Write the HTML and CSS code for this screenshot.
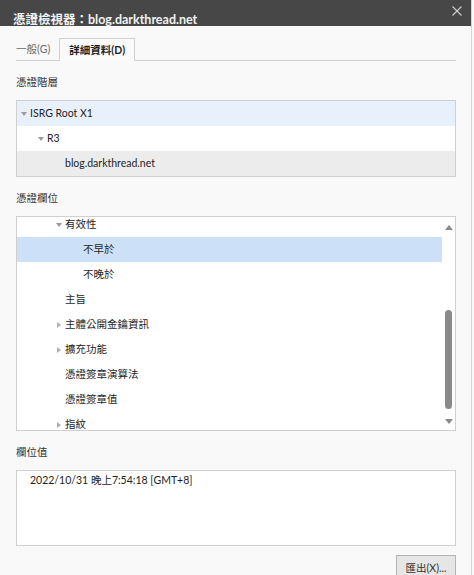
FILE: index.html
```html
<!DOCTYPE html>
<html lang="zh-TW">
<head>
    <meta charset="UTF-8">
    <title>憑證檢視器</title>
    <link rel="stylesheet" href="styles.css">
</head>
<body>
    <div class="window">
        <div class="titlebar">
            <div class="title">憑證檢視器：blog.darkthread.net</div>
            <div class="close">
                <svg width="10" height="10" viewBox="0 0 10 10"><path d="M0.5 0.5L9.5 9.5M9.5 0.5L0.5 9.5" stroke="#d0d0d0" stroke-width="1.1" fill="none"/></svg>
            </div>
        </div>

        <div class="content">
            <div class="tabs">
                <div class="tab">一般(G)</div>
                <div class="tab active">詳細資料(D)</div>
            </div>

            <div class="section">
                <div class="label">憑證階層</div>
                <div class="box tree">
                    <div class="row hover lv0"><span class="arrow down"></span>ISRG Root X1</div>
                    <div class="row lv1"><span class="arrow down"></span>R3</div>
                    <div class="row current lv2"><span class="arrow none"></span>blog.darkthread.net</div>
                </div>
            </div>

            <div class="section">
                <div class="label">憑證欄位</div>
                <div class="box fields">
                    <div class="list">
                        <div class="inner">
                            <div class="row lv2"><span class="arrow down"></span>有效性</div>
                            <div class="row selected lv3"><span class="arrow none"></span>不早於</div>
                            <div class="row lv3"><span class="arrow none"></span>不晚於</div>
                            <div class="row lv2"><span class="arrow none"></span>主旨</div>
                            <div class="row lv2"><span class="arrow right"></span>主體公開金鑰資訊</div>
                            <div class="row lv2"><span class="arrow right"></span>擴充功能</div>
                            <div class="row lv2"><span class="arrow none"></span>憑證簽章演算法</div>
                            <div class="row lv2"><span class="arrow none"></span>憑證簽章值</div>
                            <div class="row lv2"><span class="arrow right"></span>指紋</div>
                        </div>
                    </div>
                    <div class="scrollbar">
                        <span class="sb-up"></span>
                        <div class="track"><div class="thumb"></div></div>
                        <span class="sb-down"></span>
                    </div>
                </div>
            </div>

            <div class="section">
                <div class="label">欄位值</div>
                <div class="box value">2022/10/31 晚上7:54:18 [GMT+8]</div>
            </div>

            <div class="actions">
                <button class="btn">匯出(X)...</button>
            </div>
        </div>
    </div>
</body>
</html>
```

FILE: styles.css
```css
body {
    margin: 0;
    background-color: #f9f9f9;
    font-family: Lato, "Noto Sans CJK TC", sans-serif;
    font-size: 10.5px;
    color: #1e1e1e;
}

.window {
    width: 471px;
    height: 575px;
    border-right: 1px solid #d4d4d4;
    overflow: hidden;
}

.titlebar {
    height: 26px;
    background-color: #474747;
    display: flex;
    box-sizing: border-box;
    padding: 0 9px 0 13px;
}

.title {
    color: #f2f2f2;
    font-weight: bold;
    font-size: 12.5px;
    line-height: 16px;
    padding-top: 12px;
}

.close {
    margin-left: auto;
    width: 10px;
    height: 10px;
    margin-top: 6px;
    line-height: 0;
}

.content {
    padding: 0 15px 0 16px;
}

.tabs {
    margin-top: 12px;
    height: 22px;
    border-bottom: 1px solid #d2d2d2;
    display: flex;
    align-items: flex-end;
}

.tab {
    height: 22px;
    line-height: 22px;
    color: #6a6a6a;
    padding-right: 9px;
}

.tab.active {
    color: #1e1e1e;
    font-weight: bold;
    padding: 0 9px;
    height: 23px;
    margin-bottom: -1px;
    box-sizing: border-box;
    border: 1px solid #d2d2d2;
    border-bottom: none;
    background-color: #fafafa;
}

.section {
    margin-top: 13px;
}

.label {
    line-height: 16px;
    margin-bottom: 10px;
    color: #333;
}

.box {
    border: 1px solid #cfcfcf;
    background-color: #ffffff;
}

.row {
    height: 25px;
    line-height: 25px;
    display: flex;
    align-items: center;
    white-space: nowrap;
}

.row.hover { background-color: #e8f1fb; }
.row.current { background-color: #ececec; }
.row.selected { background-color: #cce0f8; }

.lv0 { padding-left: 4px; }
.lv1 { padding-left: 21px; }
.lv2 { padding-left: 39px; }
.lv3 { padding-left: 57px; }

.arrow {
    width: 6px;
    height: 6px;
    margin-right: 3px;
    flex: none;
    position: relative;
}

.arrow.down::before {
    content: "";
    position: absolute;
    left: 0;
    top: 1px;
    border-left: 3px solid transparent;
    border-right: 3px solid transparent;
    border-top: 4px solid #9c9c9c;
}

.arrow.right::before {
    content: "";
    position: absolute;
    left: 1px;
    top: 0;
    border-top: 3px solid transparent;
    border-bottom: 3px solid transparent;
    border-left: 4px solid #b0b0b0;
}

.fields {
    height: 213px;
    display: flex;
}

.list {
    flex: 1;
    overflow: hidden;
}

.inner {
    margin-top: -5px;
}

.scrollbar {
    width: 13px;
    display: flex;
    flex-direction: column;
    align-items: center;
    padding: 8px 0 6px;
    box-sizing: border-box;
}

.sb-up, .sb-down {
    width: 0;
    height: 0;
    border-left: 4px solid transparent;
    border-right: 4px solid transparent;
}

.sb-up { border-bottom: 5px solid #8a8a8a; }
.sb-down { border-top: 5px solid #8a8a8a; }

.track {
    flex: 1;
    width: 7px;
    padding: 80px 0 10px;
    box-sizing: border-box;
    display: flex;
}

.thumb {
    flex: 1;
    background-color: #8a8a8a;
    border-radius: 4px;
}

.value {
    height: 72px;
    padding: 1px 13px;
    line-height: 16px;
}

.actions {
    display: flex;
    justify-content: flex-end;
    margin-top: 9px;
}

.btn {
    width: 60px;
    height: 24px;
    border: 1px solid #b4b4b4;
    background-color: #e6e6e6;
    font-family: Lato, "Noto Sans CJK TC", sans-serif;
    font-size: 10.5px;
    color: #333;
    padding: 0;
}
```
